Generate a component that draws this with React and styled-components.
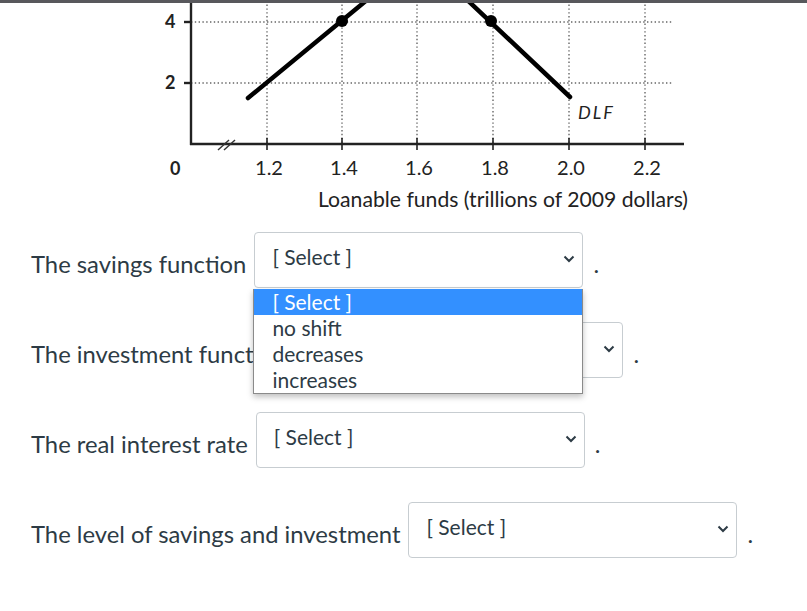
import React from 'react'
import styled, { createGlobalStyle } from 'styled-components'

const GlobalStyle = createGlobalStyle`
  body {
    margin: 0;
    background: #fff;
    font-family: Lato, "Open Sans", sans-serif;
    color: #2d3b45;
  }
`

const TICKS = [
  { x: 267, label: '1.2' },
  { x: 342, label: '1.4' },
  { x: 417, label: '1.6' },
  { x: 493, label: '1.8' },
  { x: 569, label: '2.0' },
  { x: 645, label: '2.2' },
]

const OPTIONS = ['[ Select ]', 'no shift', 'decreases', 'increases']

const Chart = () => (
  <ChartSvg width="807" height="215" viewBox="0 3 807 215">
    <g stroke="#666" strokeWidth="1.4" strokeDasharray="1.4 2.4">
      <line x1="191" y1="25" x2="673" y2="25" />
      <line x1="191" y1="86" x2="673" y2="86" />
      {TICKS.map(t => (
        <line key={t.x} x1={t.x} y1="0" x2={t.x} y2="147" />
      ))}
    </g>
    <g stroke="#222" strokeWidth="2.4">
      <line x1="191" y1="0" x2="191" y2="148" />
      <line x1="190" y1="147" x2="684" y2="147" />
      <line x1="184" y1="25" x2="191" y2="25" />
      <line x1="184" y1="86" x2="191" y2="86" />
      {TICKS.map(t => (
        <line key={t.x} x1={t.x} y1="141" x2={t.x} y2="153" strokeWidth="1.6" />
      ))}
    </g>
    <g stroke="#333" strokeWidth="1.4">
      <line x1="218" y1="153" x2="229" y2="143" />
      <line x1="224" y1="153" x2="235" y2="143" />
    </g>
    <g stroke="#000" strokeWidth="4.5" strokeLinecap="round">
      <line x1="248" y1="101" x2="373" y2="-2" />
      <line x1="462" y1="-2" x2="570" y2="100" />
    </g>
    <circle cx="342" cy="24" r="6" fill="#000" />
    <circle cx="491" cy="24" r="6" fill="#000" />
    <g fill="#222" fontFamily="Lato, sans-serif" fontSize="20">
      <text x="165" y="31" fontSize="18" fontWeight="700">4</text>
      <text x="165" y="92" fontSize="18" fontWeight="700">2</text>
      <text x="170" y="178" fontSize="18" fontWeight="700">0</text>
      {TICKS.map(t => (
        <text key={t.x} x={t.x + 2} y="178" textAnchor="middle">{t.label}</text>
      ))}
      <text x="318" y="210" fontSize="21" textLength="370" lengthAdjust="spacingAndGlyphs">
        Loanable funds (trillions of 2009 dollars)
      </text>
      <text x="578" y="122" fontSize="18" fontStyle="italic" letterSpacing="2">DLF</text>
    </g>
  </ChartSvg>
)

const Chevron = () => (
  <svg width="12" height="8" viewBox="0 0 12 8">
    <polyline points="1.5,1.5 6,6 10.5,1.5" fill="none" stroke="#2d3b45" strokeWidth="2" />
  </svg>
)

const QuestionRow = ({ label, open }) => (
  <Row>
    <Label>{label}</Label>
    <SelectWrap>
      <SelectBox>
        <SelectText>[ Select ]</SelectText>
        <ChevronSlot><Chevron /></ChevronSlot>
      </SelectBox>
      {open && (
        <OptionList>
          {OPTIONS.map((o, i) => (
            <Option key={o} $active={i === 0}>{o}</Option>
          ))}
        </OptionList>
      )}
    </SelectWrap>
    <Period>.</Period>
  </Row>
)

const App = () => (
  <>
    <GlobalStyle />
    <Page>
      <TopBar />
      <Chart />
      <Form>
        <QuestionRow label="The savings function" open />
        <QuestionRow label="The investment function" />
        <QuestionRow label="The real interest rate" />
        <QuestionRow label="The level of savings and investment" />
      </Form>
    </Page>
  </>
)

const Page = styled.div`
  width: 807px;
  height: 611px;
  overflow: hidden;
  position: relative;
`

const TopBar = styled.div`
  height: 3px;
  background: #58585c;
  position: relative;
  z-index: 2;
`

const ChartSvg = styled.svg`
  display: block;
  margin-top: -3px;
  overflow: hidden;
`

const Form = styled.div`
  display: flex;
  flex-direction: column;
  gap: 34px;
  padding: 17px 0 0 31px;
`

const Row = styled.div`
  display: flex;
  align-items: flex-start;
`

const Label = styled.span`
  font-size: 23.8px;
  line-height: 28px;
  padding-top: 18px;
  white-space: nowrap;
  margin-right: 8px;
`

const SelectWrap = styled.div`
  position: relative;
`

const SelectBox = styled.div`
  box-sizing: border-box;
  width: 329px;
  height: 56px;
  border: 1px solid #c7cdd1;
  border-radius: 4px;
  background: #fff;
  display: flex;
  align-items: flex-start;
  justify-content: space-between;
  padding: 11px 7px 0 17px;
`

const SelectText = styled.span`
  font-size: 21px;
  line-height: 26px;
`

const ChevronSlot = styled.span`
  display: flex;
  padding-top: 11px;
`

const OptionList = styled.div`
  position: absolute;
  top: 57px;
  left: -1px;
  width: 330px;
  box-sizing: border-box;
  background: #fff;
  border: 1px solid #8a8a8a;
  border-top: none;
  box-shadow: 0 3px 6px rgba(0, 0, 0, 0.25);
  z-index: 5;
`

const Option = styled.div`
  height: 26px;
  line-height: 26px;
  font-size: 21px;
  padding-left: 18px;
  background: ${p => (p.$active ? '#3390ff' : '#fff')};
  color: ${p => (p.$active ? '#fff' : '#2d3b45')};
`

const Period = styled.span`
  font-size: 24px;
  line-height: 28px;
  padding-top: 18px;
  margin-left: 10px;
`

export default App
